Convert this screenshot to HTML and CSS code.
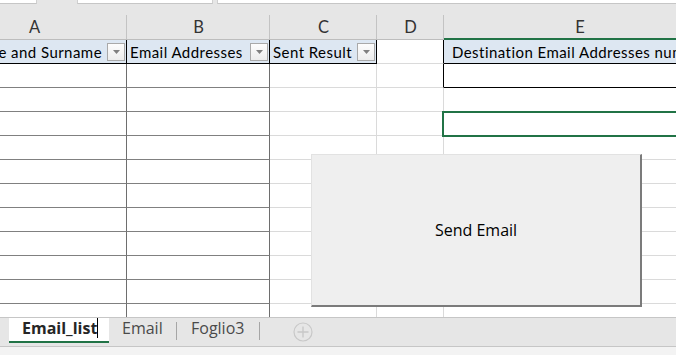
FILE: index.html
```html
<!DOCTYPE html>
<html>
<head>
<meta charset="utf-8">
<link rel="stylesheet" href="styles.css">
</head>
<body>
<div class="strip">
  <div class="box b1"></div><div class="gap1"></div><div class="box b2"></div><div class="gap2"></div><div class="box b3"></div>
</div>
<div class="sheet">
  <div class="grid">
    <div class="row colhead">
      <div class="c a">A</div><div class="c b">B</div><div class="c cc">C</div><div class="c d">D</div><div class="c e on">E</div>
    </div>
    <div class="row r1">
      <div class="c a hdr right"><span class="txt">Name and Surname</span><span class="dd"><svg width="7" height="4" viewBox="0 0 7 4"><path d="M0 0h7L3.5 4z" fill="#7f7f7f"/></svg></span></div>
      <div class="c b hdr"><span class="txt">Email Addresses</span><span class="dd"><svg width="7" height="4" viewBox="0 0 7 4"><path d="M0 0h7L3.5 4z" fill="#7f7f7f"/></svg></span></div>
      <div class="c cc hdr"><span class="txt">Sent Result</span><span class="dd"><svg width="7" height="4" viewBox="0 0 7 4"><path d="M0 0h7L3.5 4z" fill="#7f7f7f"/></svg></span></div>
      <div class="c d blank"></div>
      <div class="c e hdr wide"><span class="txt">Destination Email Addresses number</span></div>
    </div>
    <div class="row rb"><div class="c a t"></div><div class="c b t"></div><div class="c cc"></div><div class="c d dk"></div><div class="c e boxed"></div></div>
    <div class="row rb"><div class="c a t"></div><div class="c b t"></div><div class="c cc"></div><div class="c d"></div><div class="c e"></div></div>
    <div class="row rb"><div class="c a t"></div><div class="c b t"></div><div class="c cc"></div><div class="c d"></div><div class="c e"></div></div>
    <div class="row rb"><div class="c a t"></div><div class="c b t"></div><div class="c cc"></div><div class="c d"></div><div class="c e"></div></div>
    <div class="row rb"><div class="c a t"></div><div class="c b t"></div><div class="c cc"></div><div class="c d"></div><div class="c e"></div></div>
    <div class="row rb"><div class="c a t"></div><div class="c b t"></div><div class="c cc"></div><div class="c d"></div><div class="c e"></div></div>
    <div class="row rb"><div class="c a t"></div><div class="c b t"></div><div class="c cc"></div><div class="c d"></div><div class="c e"></div></div>
    <div class="row rb"><div class="c a t"></div><div class="c b t"></div><div class="c cc"></div><div class="c d"></div><div class="c e"></div></div>
    <div class="row rb"><div class="c a t"></div><div class="c b t"></div><div class="c cc"></div><div class="c d"></div><div class="c e"></div></div>
    <div class="row rb"><div class="c a t"></div><div class="c b t"></div><div class="c cc"></div><div class="c d"></div><div class="c e"></div></div>
    <div class="row rb"><div class="c a t"></div><div class="c b t"></div><div class="c cc"></div><div class="c d"></div><div class="c e"></div></div>
  </div>
  <div class="selection"></div>
  <div class="shape">Send Email</div>
</div>
<div class="tabs">
  <div class="tab active">Email_list<span class="caret"></span></div>
  <div class="tab sep t2">Email</div>
  <div class="tab sep t3">Foglio3</div>
  <svg class="add" width="20" height="20" viewBox="0 0 20 20"><circle cx="10" cy="10" r="9" fill="none" stroke="#c8c8c8" stroke-width="1.2"/><path d="M10 4.5v11M4.5 10h11" stroke="#c8c8c8" stroke-width="1.4"/></svg>
</div>
<div class="status"></div>
</body>
</html>
```

FILE: styles.css
```css
html, body {
  margin: 0;
  padding: 0;
}
body {
  width: 676px;
  height: 355px;
  overflow: hidden;
  background: #ffffff;
  font-family: Lato, "Liberation Sans", sans-serif;
  color: #000;
}

/* top strip (bottom edge of formula bar) */
.strip {
  display: flex;
  height: 4px;
  background: #e6e6e6;
}
.strip .box {
  box-sizing: border-box;
  height: 4px;
  background: #ffffff;
  border-bottom: 1px solid #c6c6c6;
  border-left: 1px solid #d0d0d0;
  border-right: 1px solid #d0d0d0;
}
.b1 { width: 37px; border-left: 0 !important; }
.gap1 { width: 40px; }
.b2 { width: 136px; }
.gap2 { width: 4px; }
.b3 { flex: 1; border-right: 0 !important; }

/* sheet */
.sheet {
  position: relative;
  height: 313px;
  overflow: hidden;
}
.grid {
  margin-left: -58px;
  width: 820px;
}
.row {
  display: flex;
}
.c {
  box-sizing: border-box;
  flex: none;
}
.a { width: 185px; }
.b { width: 143px; }
.cc { width: 107px; }
.d { width: 67px; }
.e { width: 272px; }

/* column headers */
.colhead .c {
  height: 36px;
  padding-top: 14px;
  font-size: 16.5px;
  line-height: 19px;
  text-align: center;
  color: #333333;
  background: linear-gradient(#c3c3c3, #c3c3c3) right bottom / 1px 24px no-repeat, #e6e6e6;
  border-bottom: 1px solid #bdbdbd;
}
.colhead .on {
  border-bottom: 2px solid #217346;
}

/* table header row */
.r1 .c {
  height: 24px;
  display: flex;
  align-items: center;
  font-size: 15px;
  letter-spacing: 0.45px;
  line-height: 22px;
  border-bottom: 1px solid #000;
  border-right: 1px solid #000;
  white-space: nowrap;
  overflow: hidden;
}
.hdr {
  background: #dde7f2;
  padding-left: 3px;
  padding-right: 1px;
  justify-content: space-between;
}
.hdr.right {
  justify-content: flex-end;
  gap: 5px;
}
.hdr.wide {
  justify-content: flex-start;
  padding-left: 8px;
}
.r1 .blank {
  background: #fff;
  border-bottom-color: #dadada;
}
.dd {
  box-sizing: border-box;
  flex: none;
  width: 18px;
  height: 18px;
  border: 1px solid #a9a9a9;
  background: linear-gradient(#fdfdfd, #ececec);
  display: flex;
  align-items: center;
  justify-content: center;
}
.dd svg { display: block; }

/* body rows */
.rb .c {
  height: 24px;
  border-bottom: 1px solid #dadada;
  border-right: 1px solid #dadada;
}
.rb .t {
  border-bottom-color: #808080;
  border-right-color: #6e6e6e;
}
.rb .dk {
  border-right-color: #000;
}
.rb .boxed {
  border-bottom-color: #000;
}

/* active cell selection overlay */
.selection {
  position: absolute;
  left: 442px;
  top: 107px;
  width: 300px;
  height: 26px;
  box-sizing: border-box;
  border: 2px solid #217346;
}

/* floating button shape */
.shape {
  position: absolute;
  left: 311px;
  top: 150px;
  width: 331px;
  height: 153px;
  box-sizing: border-box;
  background: #efefef;
  border-top: 1px solid #e2e2e2;
  border-left: 1px solid #e2e2e2;
  border-right: 2px solid #7b7b7b;
  border-bottom: 2px solid #7b7b7b;
  display: flex;
  align-items: center;
  justify-content: center;
  font-family: "Open Sans", sans-serif;
  font-size: 16px;
  color: #000;
}

/* sheet tabs */
.tabs {
  box-sizing: border-box;
  height: 30px;
  border-top: 1px solid #c6c6c6;
  border-bottom: 1px solid #c6c6c6;
  background: #e6e6e6;
  display: flex;
  align-items: flex-start;
  padding-left: 9px;
  font-family: "Open Sans", sans-serif;
  font-size: 16px;
  line-height: 20px;
}
.tab {
  box-sizing: border-box;
  height: 25px;
  white-space: nowrap;
  color: #4a4a4a;
}
.tab.active {
  width: 100px;
  padding-left: 13px;
  background: #ffffff;
  border-bottom: 2px solid #217346;
  font-weight: bold;
  color: #262626;
}
.caret {
  display: inline-block;
  width: 0;
  height: 20px;
  border-right: 1px solid #000;
  vertical-align: top;
}
.sep {
  background: linear-gradient(#a6a6a6, #a6a6a6) right 4px / 1px 18px no-repeat;
}
.t2 { width: 68px; padding-left: 13px; }
.t3 { width: 83px; padding-left: 14px; }
.add {
  display: block;
  margin-left: 33px;
  margin-top: 4px;
}

.status {
  height: 8px;
  background: #f3f3f3;
}
```
